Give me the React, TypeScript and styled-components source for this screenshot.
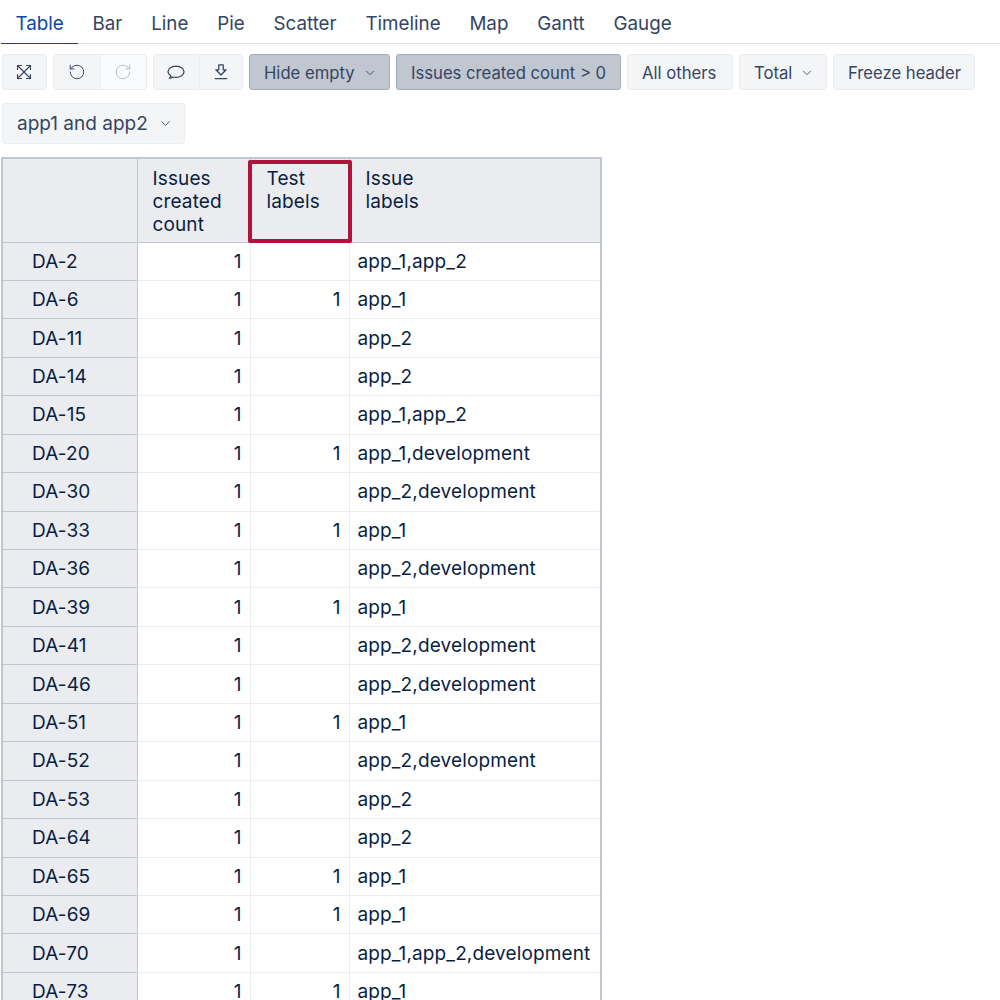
import React from "react"
import styled, { createGlobalStyle } from "styled-components"
import { ChevronDown, RotateCcw, RotateCw } from "lucide-react"

const GlobalStyle = createGlobalStyle`
    html, body {
        margin: 0;
        padding: 0;
        background: #fff;
        overflow: hidden;
        font-family: Inter, "Liberation Sans", sans-serif;
    }
`

const Page = styled.div`
    width: 1000px;
    height: 1000px;
    overflow: hidden;
    color: #172b4d;
`

const TabBar = styled.nav`
    display: flex;
    height: 43px;
    padding-left: 1px;
    border-bottom: 1px solid #dfe1e6;
`

const Tab = styled.div<{ $active?: boolean }>`
    padding: 0 14.4px;
    margin-bottom: -1px;
    height: 44px;
    box-sizing: border-box;
    line-height: 47px;
    font-size: 18.8px;
    color: ${p => (p.$active ? "#0747a6" : "#344563")};
    border-bottom: 1px solid ${p => (p.$active ? "#0747a6" : "transparent")};
`

const Toolbar = styled.div`
    display: flex;
    gap: 6px;
    padding: 10px 0 0 2px;
`

const ButtonGroup = styled.div`
    display: flex;
    height: 36px;
    box-sizing: border-box;
    border: 1px solid #ebecf0;
    border-radius: 3px;
    background: #f4f5f7;
    overflow: hidden;
`

const IconButton = styled.div<{ $width: number; $disabled?: boolean; $divided?: boolean }>`
    display: flex;
    align-items: center;
    justify-content: center;
    width: ${p => p.$width}px;
    box-sizing: border-box;
    padding-right: 1px;
    color: ${p => (p.$disabled ? "#b3bac5" : "#344563")};
    background: ${p => (p.$disabled ? "#fafbfc" : "transparent")};
    border-left: ${p => (p.$divided ? "1px solid #ebecf0" : "none")};
`

const ToolButton = styled.div<{ $width: number; $pressed?: boolean }>`
    display: flex;
    align-items: center;
    gap: 8px;
    width: ${p => p.$width}px;
    height: 36px;
    box-sizing: border-box;
    padding: 1px 0 0 14px;
    font-size: 16.65px;
    white-space: nowrap;
    color: #344563;
    border: 1px solid ${p => (p.$pressed ? "#a5adba" : "#ebecf0")};
    border-radius: 3px;
    background: ${p => (p.$pressed ? "#c1c7d0" : "#f4f5f7")};
`

const PageFilter = styled.div`
    display: flex;
    align-items: center;
    gap: 10px;
    width: 183px;
    height: 41px;
    box-sizing: border-box;
    margin: 13px 0 13px 2px;
    padding-left: 14px;
    font-size: 19px;
    color: #344563;
    border: 1px solid #ebecf0;
    border-radius: 3px;
    background: #f4f5f7;
`

const ReportTable = styled.table`
    margin-left: 1px;
    width: 600px;
    table-layout: fixed;
    border-collapse: collapse;
    border: 2px solid #c1c7d0;
    font-size: 19px;
    letter-spacing: 0.13px;
    color: #091e42;
`

const HeaderCell = styled.th<{ $width: number; $pad: number }>`
    position: relative;
    width: ${p => p.$width}px;
    height: 84px;
    box-sizing: border-box;
    padding: 8px 8px 0 ${p => p.$pad}px;
    vertical-align: top;
    text-align: left;
    font-weight: 400;
    line-height: 23px;
    background: #ebecf0;
    border: 1px solid #c1c7d0;
`

// red frame drawn over the highlighted column header
const HighlightFrame = styled.span`
    position: absolute;
    z-index: 1;
    top: 1px;
    left: -3px;
    right: -3px;
    bottom: -1px;
    border: 4px solid #b0123b;
    border-radius: 2px;
`

const Row = styled.tr`
    height: 38.45px;
`

const RowHeader = styled.td`
    box-sizing: border-box;
    padding: 0 0 0 29px;
    background: #ebecf0;
    border: 1px solid #c1c7d0;
`

const ValueCell = styled.td`
    box-sizing: border-box;
    padding: 0 8px;
    text-align: right;
    border: 1px solid #ebecf0;
`

const TextCell = styled(ValueCell)`
    text-align: left;
    white-space: nowrap;
`

const ExpandIcon = () => (
    <svg width="18" height="18" viewBox="0 0 18 18" fill="none" stroke="currentColor" strokeWidth="1.1" strokeLinecap="round" strokeLinejoin="round">
        <path d="M2.5 2.5l13 13M15.5 2.5l-13 13" />
        <path d="M2.5 6.5v-4h4M11.5 2.5h4v4M2.5 11.5v4h4M15.5 11.5v4h-4" />
    </svg>
)

const CommentIcon = () => (
    <svg width="18" height="16" viewBox="0 0 18 16" fill="none" stroke="currentColor" strokeWidth="1.25" strokeLinejoin="round">
        <path d="M3.9 11.9C2.3 10.9 1 9.5 1 7.7 1 4.6 4.6 2 9 2s8 2.6 8 5.7-3.6 5.7-8 5.7c-1.1 0-2.1-.1-3-.4-.9.8-2.1 1.2-3.6 1.2.7-.6 1.3-1.3 1.5-2.3z" />
    </svg>
)

const DownloadIcon = () => (
    <svg width="18" height="18" viewBox="0 0 18 18" fill="none" stroke="currentColor" strokeWidth="1.3" strokeLinejoin="round" strokeLinecap="round">
        <path d="M6.8 1.8h4.4v5h2.9L9 12 3.9 6.8h2.9z" />
        <path d="M3.2 15.6h11.6" />
    </svg>
)

const rows: [string, boolean, string][] = [
    ["DA-2", false, "app_1,app_2"],
    ["DA-6", true, "app_1"],
    ["DA-11", false, "app_2"],
    ["DA-14", false, "app_2"],
    ["DA-15", false, "app_1,app_2"],
    ["DA-20", true, "app_1,development"],
    ["DA-30", false, "app_2,development"],
    ["DA-33", true, "app_1"],
    ["DA-36", false, "app_2,development"],
    ["DA-39", true, "app_1"],
    ["DA-41", false, "app_2,development"],
    ["DA-46", false, "app_2,development"],
    ["DA-51", true, "app_1"],
    ["DA-52", false, "app_2,development"],
    ["DA-53", false, "app_2"],
    ["DA-64", false, "app_2"],
    ["DA-65", true, "app_1"],
    ["DA-69", true, "app_1"],
    ["DA-70", false, "app_1,app_2,development"],
    ["DA-73", true, "app_1"],
]

const tabs = ["Table", "Bar", "Line", "Pie", "Scatter", "Timeline", "Map", "Gantt", "Gauge"]

const App = () => {
    return (
        <Page>
            <GlobalStyle />
            <TabBar>
                {tabs.map((t, i) => (
                    <Tab key={t} $active={i === 0}>{t}</Tab>
                ))}
            </TabBar>
            <Toolbar>
                <ButtonGroup>
                    <IconButton $width={43}><ExpandIcon /></IconButton>
                </ButtonGroup>
                <ButtonGroup>
                    <IconButton $width={46}><RotateCcw size={18} strokeWidth={1.3} /></IconButton>
                    <IconButton $width={46} $disabled $divided><RotateCw size={18} strokeWidth={1.3} /></IconButton>
                </ButtonGroup>
                <ButtonGroup>
                    <IconButton $width={45}><CommentIcon /></IconButton>
                    <IconButton $width={43} $divided><DownloadIcon /></IconButton>
                </ButtonGroup>
                <ToolButton $width={141} $pressed>Hide empty <ChevronDown size={14} strokeWidth={1.5} /></ToolButton>
                <ToolButton $width={225} $pressed>Issues created count &gt; 0</ToolButton>
                <ToolButton $width={106}>All others</ToolButton>
                <ToolButton $width={88}>Total <ChevronDown size={14} strokeWidth={1.5} /></ToolButton>
                <ToolButton $width={142}>Freeze header</ToolButton>
            </Toolbar>
            <PageFilter>app1 and app2 <ChevronDown size={15} strokeWidth={1.5} /></PageFilter>
            <ReportTable>
                <thead>
                    <tr>
                        <HeaderCell $width={135} $pad={15}></HeaderCell>
                        <HeaderCell $width={113} $pad={15}>Issues<br />created<br />count</HeaderCell>
                        <HeaderCell $width={99} $pad={16}>Test<br />labels<HighlightFrame /></HeaderCell>
                        <HeaderCell $width={252} $pad={16}>Issue<br />labels</HeaderCell>
                    </tr>
                </thead>
                <tbody>
                    {rows.map(([key, hasTest, labels]) => (
                        <Row key={key}>
                            <RowHeader>{key}</RowHeader>
                            <ValueCell>1</ValueCell>
                            <ValueCell>{hasTest ? "1" : ""}</ValueCell>
                            <TextCell>{labels}</TextCell>
                        </Row>
                    ))}
                </tbody>
            </ReportTable>
        </Page>
    )
}

export default App
